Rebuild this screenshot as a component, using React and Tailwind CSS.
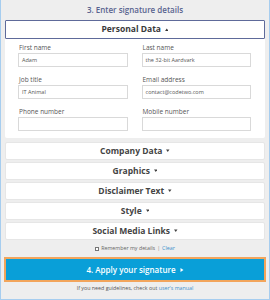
import React from 'react';

const font = { fontFamily: '"Open Sans", "Liberation Sans", sans-serif' };

function Tri({ dir = 'down', color = '#444', size = 4 }) {
  const pts = {
    down: '0,1 8,1 4,7',
    up: '0,7 8,7 4,1',
    right: '1,0 7,4 1,8',
  }[dir];
  return (
    <svg width={size} height={size} viewBox="0 0 8 8" className="inline-block shrink-0">
      <polygon points={pts} fill={color} />
    </svg>
  );
}

function Field({ label, value }) {
  return (
    <div className="flex flex-col">
      <span className="text-[6.5px] leading-[8px] text-[#555] pl-[1px]">{label}</span>
      <div className="mt-[1px] h-[14px] bg-white border border-[#d9d9d9] flex items-center px-[3px] text-[5.5px] text-[#555]">
        {value}
      </div>
    </div>
  );
}

function Bar({ title }) {
  return (
    <div className="h-[18px] bg-white rounded-[2px] border border-[#e6e6e6] flex items-center justify-center gap-[4px]">
      <span className="text-[8.5px] font-bold text-[#444]">{title}</span>
      <Tri dir="down" size={3.5} />
    </div>
  );
}

export default function App() {
  const bars = ['Company Data', 'Graphics', 'Disclaimer Text', 'Style', 'Social Media Links'];
  return (
    <div style={font} className="w-[270px] h-[300px] bg-[#eeeeee] border-x border-b border-[#a6cdef] overflow-hidden flex flex-col">
      <div className="h-[20px] flex items-center justify-center text-[8px] font-semibold text-[#58638f]">
        3. Enter signature details
      </div>

      <div className="px-[4px] flex flex-col">
        <div className="h-[19px] bg-white border border-[#5e6a9a] rounded-[1px] flex items-center justify-center gap-[4px]">
          <span className="text-[8.5px] font-bold text-[#3a3a3a]">Personal Data</span>
          <Tri dir="up" size={3.5} color="#333" />
        </div>
        <div className="bg-white rounded-b-[2px] pt-[5px] pb-[7px] pl-[13px] pr-[14px] grid grid-cols-2 gap-x-[14px] gap-y-[9px]">
          <Field label="First name" value="Adam" />
          <Field label="Last name" value="the 32-bit Aardvark" />
          <Field label="Job title" value="IT Animal" />
          <Field label="Email address" value="contact@codetwo.com" />
          <Field label="Phone number" value="" />
          <Field label="Mobile number" value="" />
        </div>

        <div className="mt-[4px] flex flex-col gap-[2px]">
          {bars.map(b => (
            <Bar key={b} title={b} />
          ))}
        </div>

        <div className="h-[17px] flex items-center justify-center gap-[2px] text-[5.3px] text-[#666]">
          <span className="w-[4px] h-[4px] border border-[#777] bg-white inline-block" />
          <span>Remember my details</span>
          <span className="text-[#888]">|</span>
          <span className="text-[#3f8fcc]">Clear</span>
        </div>
      </div>

      <div className="mx-[3px] h-[25px] border-2 border-[#f2a55c] bg-[#099fd8] flex items-center justify-center gap-[4px]">
        <span className="text-[8px] font-semibold text-white">4. Apply your signature</span>
        <Tri dir="right" size={4} color="#fff" />
      </div>

      <div className="h-[14px] flex items-center justify-center text-[5.3px] text-[#555]">
        If you need guidelines, check out&nbsp;<span className="text-[#3f8fcc]">user's manual</span>
      </div>
    </div>
  );
}
